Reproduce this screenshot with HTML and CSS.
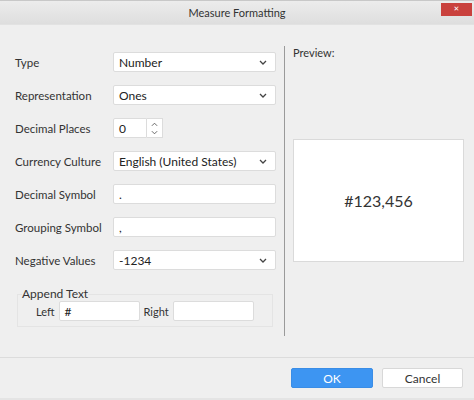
FILE: index.html
```html
<!DOCTYPE html>
<html>
<head>
<meta charset="utf-8">
<link rel="stylesheet" href="styles.css">
</head>
<body>
<div class="dialog">
  <div class="titlebar">
    <span></span>
    <span class="title">Measure Formatting</span>
    <span class="close">&#x2715;</span>
  </div>
  <div class="body">
    <div class="form">
      <div class="grid">
        <span class="label">Type</span>
        <div class="field select"><span>Number</span><svg class="chev" viewBox="0 0 8 5" width="8" height="5"><path d="M1 1 L4 4 L7 1" fill="none" stroke="#444" stroke-width="1.3"/></svg></div>
        <span class="label">Representation</span>
        <div class="field select"><span>Ones</span><svg class="chev" viewBox="0 0 8 5" width="8" height="5"><path d="M1 1 L4 4 L7 1" fill="none" stroke="#444" stroke-width="1.3"/></svg></div>
        <span class="label">Decimal Places</span>
        <div class="spin">
          <div class="field spin-input"><span>0</span></div>
          <div class="spin-btns">
            <svg viewBox="0 0 8 5" width="7" height="5"><path d="M1 4 L4 1 L7 4" fill="none" stroke="#555" stroke-width="1"/></svg>
            <svg viewBox="0 0 8 5" width="7" height="5"><path d="M1 1 L4 4 L7 1" fill="none" stroke="#555" stroke-width="1"/></svg>
          </div>
        </div>
        <span class="label">Currency Culture</span>
        <div class="field select"><span>English (United States)</span><svg class="chev" viewBox="0 0 8 5" width="8" height="5"><path d="M1 1 L4 4 L7 1" fill="none" stroke="#444" stroke-width="1.3"/></svg></div>
        <span class="label">Decimal Symbol</span>
        <div class="field"><span>.</span></div>
        <span class="label">Grouping Symbol</span>
        <div class="field"><span>,</span></div>
        <span class="label">Negative Values</span>
        <div class="field select"><span>-1234</span><svg class="chev" viewBox="0 0 8 5" width="8" height="5"><path d="M1 1 L4 4 L7 1" fill="none" stroke="#444" stroke-width="1.3"/></svg></div>
      </div>
      <fieldset class="append">
        <legend>Append Text</legend>
        <span class="small-label">Left</span>
        <div class="field short"><span>#</span></div>
        <span class="small-label">Right</span>
        <div class="field short"></div>
      </fieldset>
    </div>
    <div class="sep"></div>
    <div class="preview">
      <div class="preview-label">Preview:</div>
      <div class="preview-box">#123,456</div>
    </div>
  </div>
  <div class="footer">
    <button class="btn ok">OK</button>
    <button class="btn cancel">Cancel</button>
  </div>
</div>
</body>
</html>
```

FILE: styles.css
```css
html, body {
  margin: 0;
  padding: 0;
  background: #efefef;
}
.dialog {
  width: 474px;
  height: 400px;
  display: flex;
  flex-direction: column;
  font-family: "Lato", "Open Sans", sans-serif;
  font-size: 12px;
  color: #333;
  background: #efefef;
  box-sizing: border-box;
  border-top: 1px solid #c8c8c8;
}
.titlebar {
  height: 23px;
  display: grid;
  grid-template-columns: 1fr auto 1fr;
  align-items: start;
  background: linear-gradient(#ececec, #dedede);
  border-bottom: 1px solid #e2e2e2;
}
.title {
  line-height: 23px;
  font-size: 11px;
  color: #333;
}
.close {
  justify-self: end;
  margin-top: 2px;
  margin-right: 2px;
  width: 31px;
  height: 13px;
  background: #c9413d;
  color: #fff;
  font-family: "DejaVu Sans", sans-serif;
  font-size: 7px;
  line-height: 13px;
  text-align: center;
}
.body {
  flex: 1;
  display: flex;
  align-items: flex-start;
}
.form {
  padding: 27px 0 0 15px;
  width: 261px;
}
.grid {
  display: grid;
  grid-template-columns: 98px 163px;
  grid-auto-rows: 20px;
  row-gap: 13px;
  align-items: center;
}
.label {
  font-size: 11.5px;
  color: #333;
}
.field {
  height: 20px;
  box-sizing: border-box;
  background: #fff;
  border: 1px solid #dcdcdc;
  border-radius: 2px;
  display: flex;
  align-items: center;
  padding: 0 5px;
  font-size: 12px;
  color: #222;
}
.select {
  justify-content: space-between;
  padding-right: 8px;
}
.chev {
  display: block;
}
.spin {
  display: flex;
  height: 20px;
}
.spin-input {
  width: 34px;
  border-radius: 2px 0 0 2px;
}
.spin-btns {
  width: 16px;
  box-sizing: border-box;
  background: #fff;
  border: 1px solid #dcdcdc;
  border-left: none;
  display: flex;
  flex-direction: column;
  align-items: center;
  justify-content: center;
  gap: 3px;
}
.spin-btns svg {
  display: block;
}
.append {
  margin: 17px 0 0 2px;
  width: 256px;
  box-sizing: border-box;
  border: 1px solid #e4e4e4;
  padding: 0 0 5px 18px;
  display: flex;
  align-items: center;
  gap: 4px;
}
.append legend {
  padding: 0;
  margin-left: -14px;
  font-size: 12px;
  color: #333;
  line-height: 14px;
}
.small-label {
  font-size: 11px;
}
.short {
  width: 81px;
}
.sep {
  width: 1px;
  height: 290px;
  margin: 21px 8px 0 8px;
  background: #9a9a9a;
}
.preview {
  width: 171px;
  padding-top: 21px;
}
.preview-label {
  font-size: 11px;
  color: #333;
  line-height: 14px;
}
.preview-box {
  margin-top: 79px;
  height: 123px;
  box-sizing: border-box;
  background: #fff;
  border: 1px solid #dadada;
  display: flex;
  align-items: center;
  justify-content: center;
  font-size: 16px;
  color: #333;
}
.footer {
  height: 43px;
  box-sizing: border-box;
  border-top: 1px solid #dcdcdc;
  display: flex;
  justify-content: flex-end;
  align-items: flex-start;
  padding: 10px 11px 0 0;
  gap: 9px;
  border-bottom: 2px solid #e4e4e4;
}
.btn {
  height: 20px;
  width: 82px;
  font-family: "Lato", "Open Sans", sans-serif;
  font-size: 12px;
  border-radius: 2px;
  padding: 0;
  margin: 0;
}
.ok {
  background: #3d95f2;
  border: 1px solid #3a8de6;
  color: #fff;
}
.cancel {
  width: 81px;
  background: #fff;
  border: 1px solid #d8d8d8;
  color: #333;
}
```
